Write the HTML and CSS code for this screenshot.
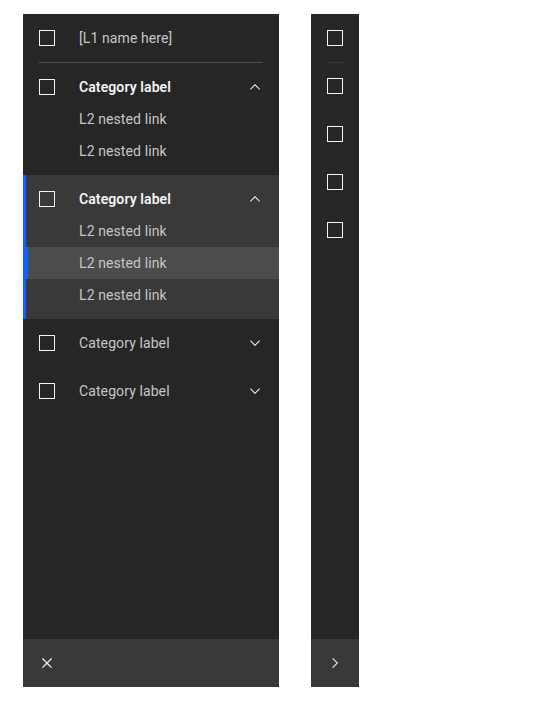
FILE: index.html
```html
<!DOCTYPE html>
<html lang="en">
<head>
    <meta charset="UTF-8">
    <meta name="viewport" content="width=device-width, initial-scale=1.0">
    <title>Side navigation</title>
    <link rel="stylesheet" href="styles.css">
</head>
<body>
    <div class="page">
        <nav class="side-nav">
            <ul class="nav-items">
                <li class="nav-row">
                    <span class="check"></span>
                    <span class="label">[L1 name here]</span>
                </li>
                <li class="divider"></li>
                <li class="category expanded">
                    <div class="category-head">
                        <span class="check"></span>
                        <span class="label">Category label</span>
                        <svg class="chevron" viewBox="0 0 16 16" width="16" height="16"><path d="M8 5L13 10 12.3 10.7 8 6.4 3.7 10.7 3 10z"/></svg>
                    </div>
                    <ul class="sub-links">
                        <li>L2 nested link</li>
                        <li>L2 nested link</li>
                    </ul>
                </li>
                <li class="category expanded active">
                    <div class="category-head">
                        <span class="check"></span>
                        <span class="label">Category label</span>
                        <svg class="chevron" viewBox="0 0 16 16" width="16" height="16"><path d="M8 5L13 10 12.3 10.7 8 6.4 3.7 10.7 3 10z"/></svg>
                    </div>
                    <ul class="sub-links">
                        <li>L2 nested link</li>
                        <li class="hover">L2 nested link</li>
                        <li>L2 nested link</li>
                    </ul>
                </li>
                <li class="category">
                    <div class="category-head">
                        <span class="check"></span>
                        <span class="label">Category label</span>
                        <svg class="chevron" viewBox="0 0 16 16" width="16" height="16"><path d="M8 11L3 6 3.7 5.3 8 9.6 12.3 5.3 13 6z"/></svg>
                    </div>
                </li>
                <li class="category">
                    <div class="category-head">
                        <span class="check"></span>
                        <span class="label">Category label</span>
                        <svg class="chevron" viewBox="0 0 16 16" width="16" height="16"><path d="M8 11L3 6 3.7 5.3 8 9.6 12.3 5.3 13 6z"/></svg>
                    </div>
                </li>
            </ul>
            <div class="nav-footer">
                <button class="toggle" aria-label="Close">
                    <svg viewBox="0 0 32 32" width="20" height="20"><path d="M24 9.4L22.6 8 16 14.6 9.4 8 8 9.4 14.6 16 8 22.6 9.4 24 16 17.4 22.6 24 24 22.6 17.4 16z"/></svg>
                </button>
            </div>
        </nav>

        <nav class="side-rail">
            <ul class="rail-items">
                <li class="rail-row"><span class="check"></span></li>
                <li class="rail-divider"></li>
                <li class="rail-row"><span class="check"></span></li>
                <li class="rail-row"><span class="check"></span></li>
                <li class="rail-row"><span class="check"></span></li>
                <li class="rail-row"><span class="check"></span></li>
            </ul>
            <div class="nav-footer">
                <button class="toggle rail-toggle" aria-label="Expand">
                    <svg viewBox="0 0 16 16" width="16" height="16"><path d="M11 8L6 13 5.3 12.3 9.6 8 5.3 3.7 6 3z"/></svg>
                </button>
            </div>
        </nav>
    </div>
</body>
</html>
```

FILE: styles.css
```css
body {
    margin: 0;
    background-color: white;
    font-family: Roboto, "Liberation Sans", sans-serif;
    font-size: 14px;
}
ul {
    list-style: none;
    margin: 0;
    padding: 0;
}
.page {
    display: flex;
    gap: 32px;
    padding: 14px 0 0 23px;
}
.side-nav,
.side-rail {
    height: 673px;
    background-color: #262626;
    display: flex;
    flex-direction: column;
}
.side-nav {
    width: 256px;
}
.side-rail {
    width: 48px;
}
.nav-items,
.rail-items {
    flex: 1;
}
.check {
    width: 16px;
    height: 16px;
    box-sizing: border-box;
    border: 1px solid #f4f4f4;
    flex-shrink: 0;
}
.label {
    flex: 1;
    margin-left: 24px;
    color: #c6c6c6;
    letter-spacing: 0.1px;
}
.nav-row {
    height: 48px;
    display: flex;
    align-items: center;
    padding: 0 16px;
}
.divider {
    height: 1px;
    margin: 0 16px;
    background-color: #525252;
}
.category {
    padding: 8px 0;
}
.category.active {
    background-color: #393939;
    box-shadow: inset 3px 0 0 #0f62fe;
}
.category-head {
    height: 32px;
    display: flex;
    align-items: center;
    padding: 0 16px;
}
.expanded .category-head .label {
    color: #f4f4f4;
    font-weight: 600;
}
.chevron {
    fill: #f4f4f4;
}
.sub-links li {
    height: 32px;
    display: flex;
    align-items: center;
    padding-left: 56px;
    color: #c6c6c6;
    letter-spacing: 0.1px;
}
.sub-links li.hover {
    background-color: #4c4c4c;
    box-shadow: inset 5px 0 0 #0f62fe;
}
.nav-footer {
    height: 48px;
    background-color: #393939;
    display: flex;
    align-items: center;
}
.toggle {
    width: 48px;
    height: 48px;
    border: none;
    padding: 0;
    background: none;
    display: flex;
    justify-content: center;
    align-items: center;
    cursor: pointer;
}
.toggle svg {
    fill: #f4f4f4;
}
.rail-row {
    height: 48px;
    display: flex;
    justify-content: center;
    align-items: center;
}
.rail-divider {
    height: 1px;
    width: 16px;
    margin: 0 auto -1px;
    background-color: #393939;
}
```
